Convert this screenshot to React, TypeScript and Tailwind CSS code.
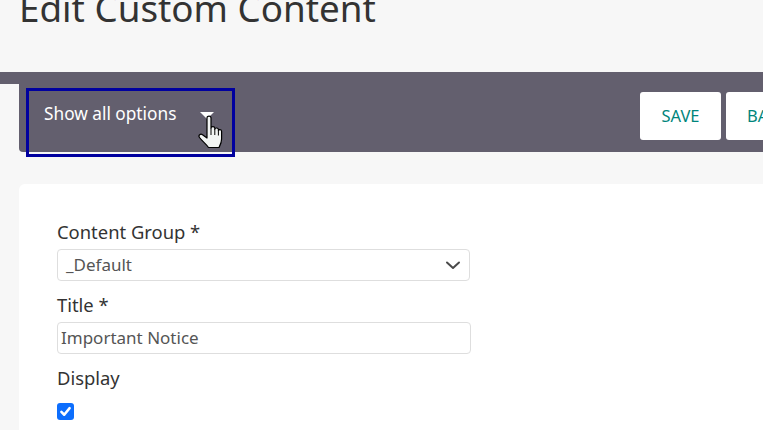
import React from 'react';

const font = { fontFamily: '"Noto Sans", sans-serif' };

const HandCursor = () => (
  <svg width="26" height="35" viewBox="0 0 26 35" className="absolute left-[198px] top-[115px]">
    <path
      d="M9 3c0-2.600 4-2.600 4 0v10c.3-1.800 3.600-1.800 3.800.2v1c.3-1.700 3.400-1.600 3.600.3v1c.4-1.400 3.100-1.200 3.200.8V24c0 3.600-1.300 5.800-2.600 8.500H10.500C8.500 29.500 4 26 1.500 22.500c-1.600-2.300 1-4.300 3-2.800L9 23z"
      fill="#f2f4f3"
      stroke="#000"
      strokeWidth="1.200"
      strokeLinejoin="round"
    />
    <path d="M13 13v7M16.800 14v6M20.400 15.500v5" stroke="#000" strokeWidth="1" fill="none" />
  </svg>
);

const Chevron = () => (
  <svg width="16" height="16" viewBox="0 0 16 16" className="shrink-0">
    <path d="M2 5.500l6 5.500 6-5.500" fill="none" stroke="#4a4a4a" strokeWidth="2" strokeLinecap="round" strokeLinejoin="round" />
  </svg>
);

const Label = ({ children }: { children: React.ReactNode }) => (
  <div className="text-[18.400px] leading-[26px] text-[#333333]">{children}</div>
);

export default function App() {
  return (
    <div className="relative h-[430px] w-[763px] overflow-hidden bg-[#f7f7f7]" style={font}>
      <div className="h-[72px] overflow-hidden">
        <h1 className="-mt-[19px] pl-[19px] text-[36.800px] leading-[54px] font-normal whitespace-nowrap text-[#333333]">
          Edit Custom Content
        </h1>
      </div>

      {/* toolbar */}
      <div className="h-[12px] bg-[#635f6e]" />
      <div className="ml-[19px] flex h-[68px] items-start justify-between rounded-bl-[4px] bg-[#635f6e] pl-[25px]">
        <div className="flex items-center pt-[18px] text-[17.250px] leading-[24px] text-white">
          <span>Show all options</span>
          <span className="ml-[24px] mt-[2px] h-0 w-0 border-x-[7px] border-t-[7px] border-x-transparent border-t-white" />
        </div>
        <div className="flex w-[123px] shrink-0 gap-[5px] overflow-hidden pt-[8px]">
          <button className="h-[48px] w-[81px] shrink-0 rounded-[3px] bg-white text-[16.500px] text-[#00857c]">SAVE</button>
          <button className="h-[48px] w-[81px] shrink-0 rounded-[3px] bg-white pl-[21px] text-left text-[16.500px] text-[#00857c]">BA</button>
        </div>
      </div>

      {/* form card */}
      <div className="ml-[19px] mt-[32px] h-[246px] rounded-tl-[6px] bg-white pl-[38px] pt-[35px]">
        <Label>Content Group *</Label>
        <div className="mt-[4px] flex h-[32px] w-[413px] items-center justify-between rounded-[4px] border border-[#dedede] pl-[8px] pr-[8px] text-[17px] text-[#555555]">
          <span>_Default</span>
          <Chevron />
        </div>
        <div className="mt-[11px]">
          <Label>Title *</Label>
        </div>
        <div className="mt-[4px] flex h-[32px] w-[414px] items-center rounded-[4px] border border-[#dedede] pl-[3px] text-[17px] text-[#555555]">
          Important Notice
        </div>
        <div className="mt-[11px]">
          <Label>Display</Label>
        </div>
        <div className="mt-[12px] flex h-[17px] w-[17px] items-center justify-center rounded-[3px] bg-[#0d6efd]">
          <svg width="15" height="15" viewBox="0 0 20 20">
            <path d="M4.500 10.500l3.800 3.800L15.500 5.500" fill="none" stroke="#fff" strokeWidth="3.400" strokeLinecap="round" strokeLinejoin="round" />
          </svg>
        </div>
      </div>

      {/* highlight annotation */}
      <div className="absolute left-[26px] top-[88px] h-[69px] w-[209px] border-[3px] border-[#00009f]" />
      <HandCursor />
    </div>
  );
}
